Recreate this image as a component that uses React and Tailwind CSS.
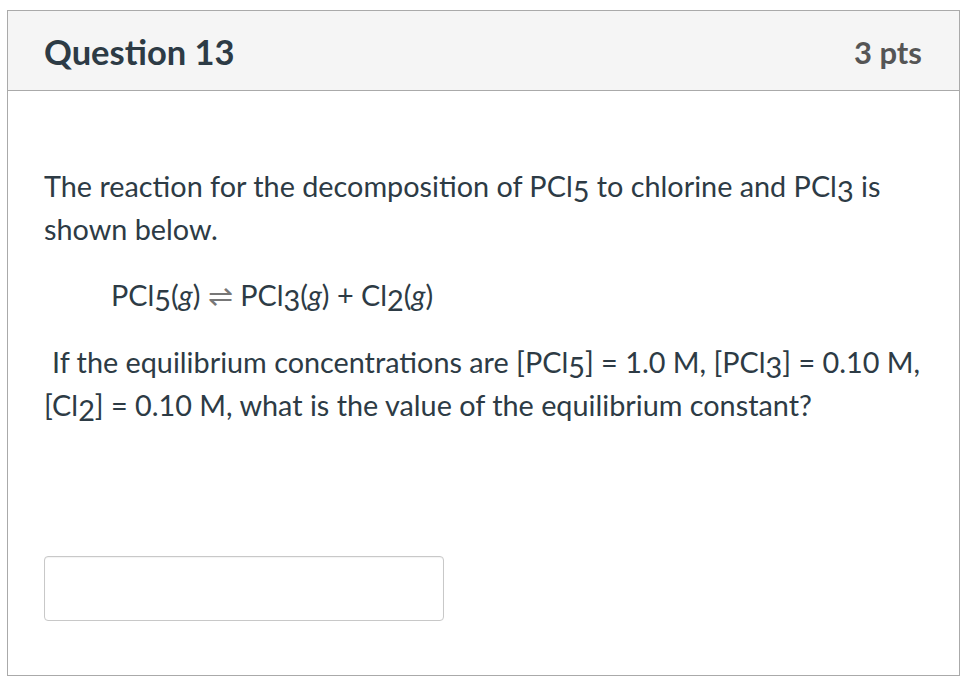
export default function App() {
  const Sub = ({ children }) => <span className="relative top-[5px]">{children}</span>;
  const G = () => (
    <>
      (<span className="italic">g</span>)
    </>
  );

  return (
    <div className="min-h-[694px] bg-white pl-[7px] pt-[10px] font-['Lato',sans-serif] text-[#2d3b45]">
      <div className="w-[953px] border border-[#aaaaaa]">
        {/* header */}
        <div className="flex h-[80px] items-center justify-between border-b border-[#aaaaaa] bg-[#f5f5f5] pl-[36px] pr-[37px] pt-[3px]">
          <h2 className="text-[34.5px] font-bold leading-none">Question 13</h2>
          <span className="text-[31px] font-bold leading-none text-[#555555]">3 pts</span>
        </div>

        {/* body */}
        <div className="pb-[54px] pl-[36px] pr-[30px] pt-[74px] text-[28.8px] leading-[43.2px]">
          <p>
            The reaction for the decomposition of PCl<Sub>5</Sub> to chlorine and PCl<Sub>3</Sub> is shown below.
          </p>
          <p className="mt-[23px] pl-[67px]">
            PCl<Sub>5</Sub>
            <G /> <span className="text-[30px] leading-none text-[#777777]">⇌</span> PCl<Sub>3</Sub>
            <G /> + Cl<Sub>2</Sub>
            <G />
          </p>
          <p className="mt-[23px] pl-[8px]">
            If the equilibrium concentrations are [PCl<Sub>5</Sub>] = 1.0 M, [PCl<Sub>3</Sub>] = 0.10 M,
          </p>
          <p>
            [Cl<Sub>2</Sub>] = 0.10 M, what is the value of the equilibrium constant?
          </p>
          <input
            type="text"
            className="mt-[129px] block h-[65px] w-[400px] rounded-[4px] border border-[#c8c8c8] bg-white px-3 text-[16px] shadow-[inset_0_1px_1px_rgba(0,0,0,0.05)] outline-none"
          />
        </div>
      </div>
    </div>
  );
}
